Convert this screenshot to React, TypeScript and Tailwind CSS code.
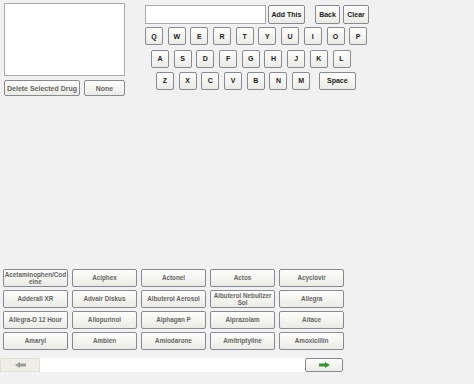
import React from "react";

const rowQ = ["Q", "W", "E", "R", "T", "Y", "U", "I", "O", "P"];
const rowA = ["A", "S", "D", "F", "G", "H", "J", "K", "L"];
const rowZ = ["Z", "X", "C", "V", "B", "N", "M"];

const drugs = [
  "Acetaminophen/Codeine",
  "Aciphex",
  "Actonel",
  "Actos",
  "Acyclovir",
  "Adderall XR",
  "Advair Diskus",
  "Albuterol Aerosol",
  "Albuterol Nebulizer Sol",
  "Allegra",
  "Allegra-D 12 Hour",
  "Allopurinol",
  "Alphagan P",
  "Alprazolam",
  "Altace",
  "Amaryl",
  "Ambien",
  "Amiodarone",
  "Amitriptyline",
  "Amoxicillin",
];

const btn =
  "flex items-center justify-center rounded-[2px] border border-[#878a92] bg-gradient-to-b from-[#fdfdfb] to-[#ebebe6] font-bold leading-[7px]";

function Key({ label, focused }: { label: string; focused?: boolean }) {
  return (
    <button
      className={`${btn} h-[18px] w-[18px] text-[7px] text-[#222] ${
        focused ? "border-[#3f5f95]" : ""
      }`}
    >
      {label}
    </button>
  );
}

function Arrow({ color, left }: { color: string; left?: boolean }) {
  return (
    <svg width="11" height="6" viewBox="0 0 11 6" className={left ? "-scale-x-100" : ""}>
      <path d="M0 1.5h6V0l5 3-5 3V4.5H0z" fill={color} />
    </svg>
  );
}

export default function App() {
  return (
    <div
      className="flex h-[384px] w-[474px] flex-col bg-[#f1f1f1]"
      style={{ fontFamily: '"Liberation Sans", Arial, sans-serif' }}
    >
      <div className="flex pt-[3px]">
        <div className="ml-[4px] flex w-[121px] flex-col">
          <div className="h-[73px] border border-[#a9a9a9] bg-white" />
          <div className="mt-[4px] flex gap-[4px]">
            <button className={`${btn} h-[16px] w-[76px] text-[7px] text-[#666]`}>
              Delete Selected Drug
            </button>
            <button className={`${btn} h-[16px] w-[41px] text-[7px] text-[#666]`}>
              None
            </button>
          </div>
        </div>

        <div className="ml-[20px] flex flex-col pt-[2px]">
          <div className="flex">
            <div className="h-[19px] w-[121px] border border-[#a9a9a9] bg-white" />
            <button className={`${btn} ml-[2px] h-[19px] w-[37px] text-[7px] text-[#222]`}>
              Add This
            </button>
            <button className={`${btn} ml-[10px] h-[19px] w-[25px] text-[7px] text-[#222]`}>
              Back
            </button>
            <button className={`${btn} ml-[3px] h-[19px] w-[26px] text-[7px] text-[#222]`}>
              Clear
            </button>
          </div>
          <div className="mt-[3px] flex gap-[4.7px]">
            {rowQ.map((k) => (
              <Key key={k} label={k} />
            ))}
          </div>
          <div className="ml-[6px] mt-[4.5px] flex gap-[4.7px]">
            {rowA.map((k) => (
              <Key key={k} label={k} focused={k === "A"} />
            ))}
          </div>
          <div className="ml-[11px] mt-[4px] flex gap-[4.7px]">
            {rowZ.map((k) => (
              <Key key={k} label={k} />
            ))}
            <button className={`${btn} ml-[4px] h-[18px] w-[37px] text-[7px] text-[#222]`}>
              Space
            </button>
          </div>
        </div>
      </div>

      <div className="flex-1" />

      <div className="ml-[3px] grid w-[341px] grid-cols-5 gap-x-[4.2px] gap-y-[3.6px]">
        {drugs.map((d) => (
          <button
            key={d}
            className={`${btn} h-[17.4px] break-all px-0 text-center text-[6.3px] text-[#666]`}
          >
            {d}
          </button>
        ))}
      </div>

      <div className="mb-[12px] mt-[8.5px] flex h-[14px] w-[343px] bg-white">
        <button className="flex h-[14px] w-[40px] items-center justify-center border border-[#e2e2da] bg-[#eeeee7]">
          <Arrow color="#9a9a9a" left />
        </button>
        <div className="flex-1" />
        <button className={`${btn} h-[14px] w-[38px]`}>
          <Arrow color="#2e9a2e" />
        </button>
      </div>
    </div>
  );
}
